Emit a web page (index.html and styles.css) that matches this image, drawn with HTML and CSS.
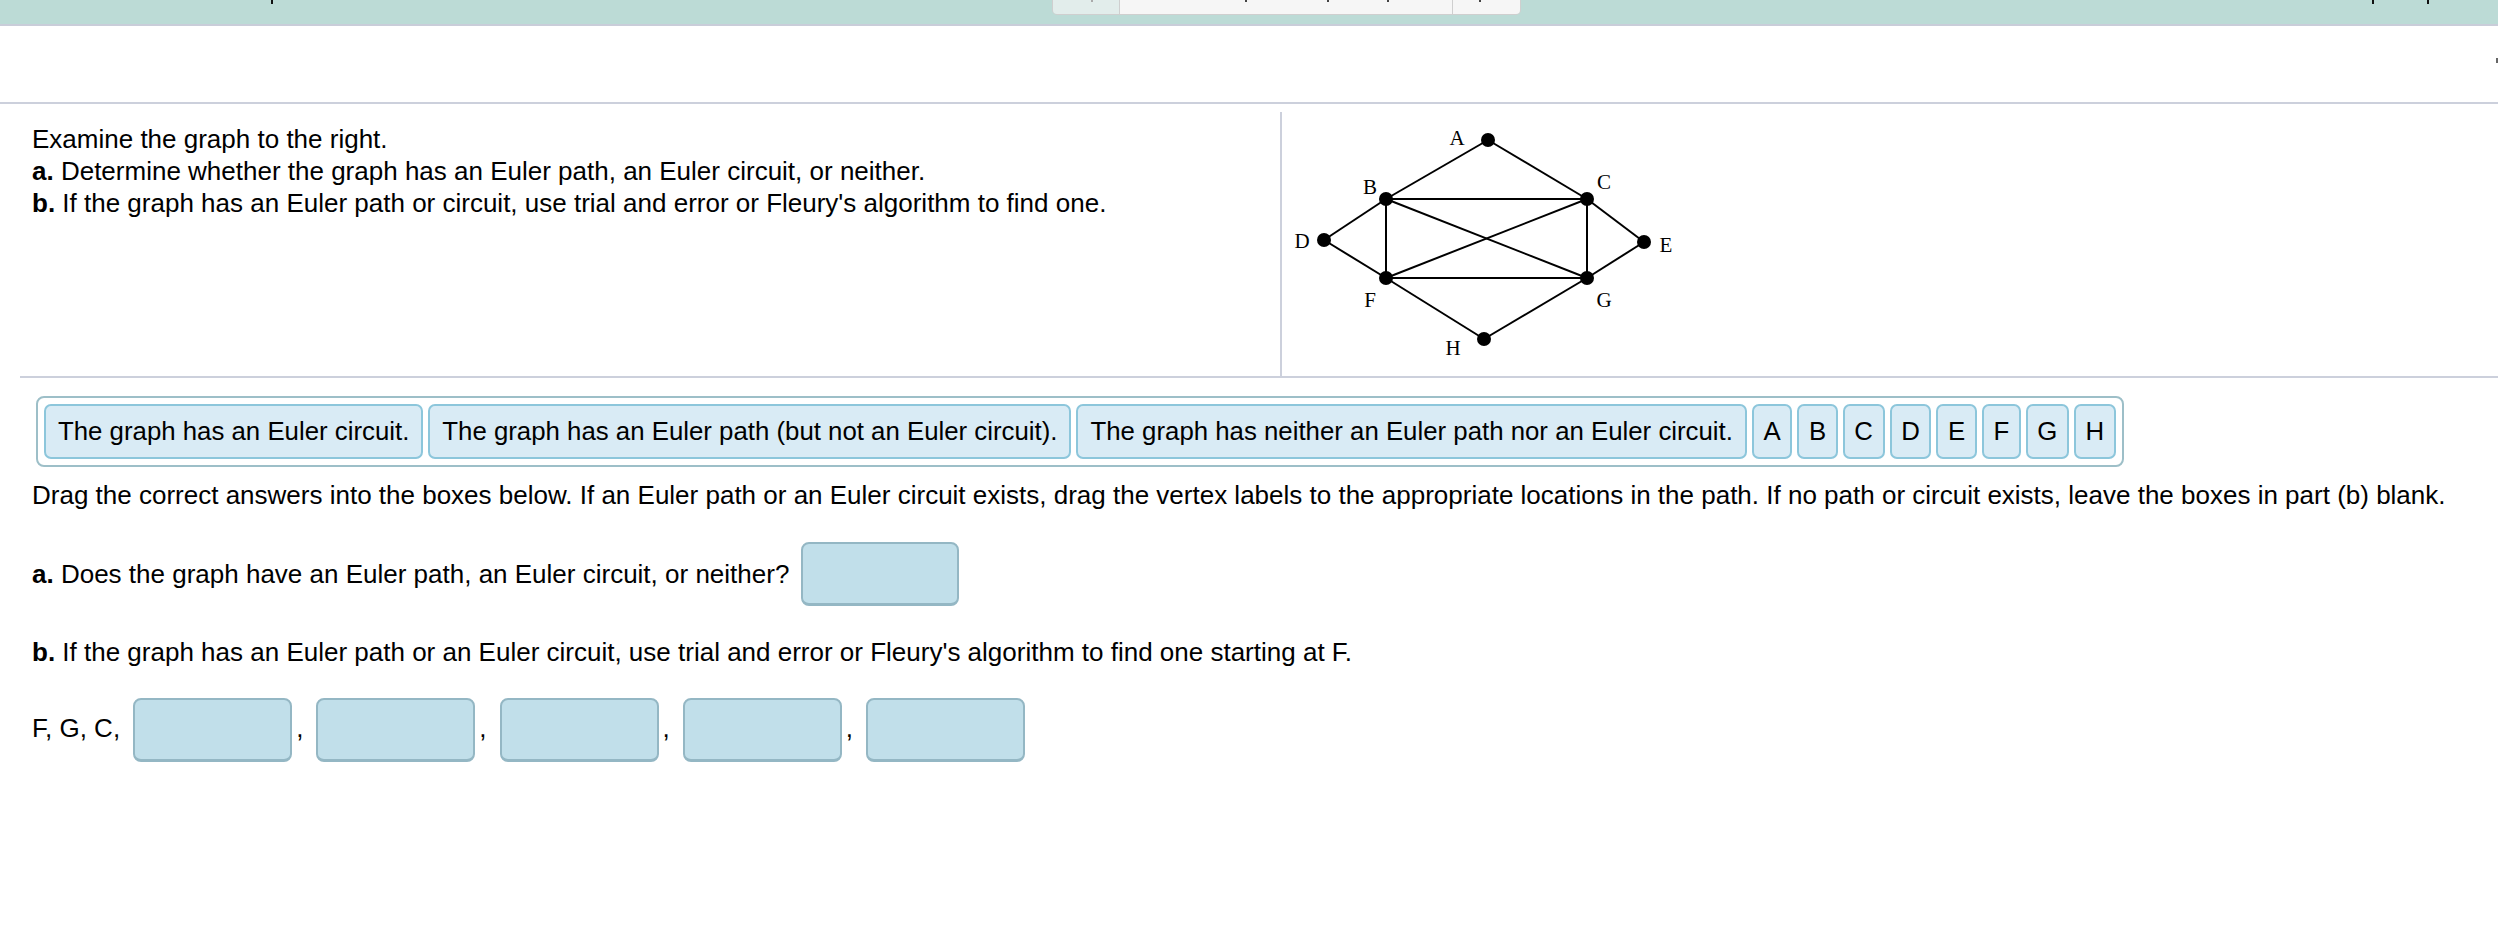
FILE: index.html
```html
<!DOCTYPE html>
<html>
<head>
<meta charset="utf-8">
<title>Euler path question</title>
<link rel="stylesheet" href="styles.css">
</head>
<body>
<header class="topbar">
  <span class="tick tick-1"></span>
  <div class="tab">
    <div class="tab-seg tab-left"><span class="dot dot-a"></span></div>
    <div class="tab-seg tab-mid"><span class="dot dot-b"></span><span class="dot dot-c"></span><span class="dot dot-d"></span></div>
    <div class="tab-seg tab-right"><span class="dot dot-e"></span></div>
  </div>
  <span class="tick tick-2"></span>
  <span class="tick tick-3"></span>
</header>
<div class="toolstrip"><span class="edge-mark"></span></div>

<section class="problem">
  <div class="prompt">
    <p>Examine the graph to the right.</p>
    <p><b>a.</b> Determine whether the graph has an Euler path, an Euler circuit, or neither.</p>
    <p><b>b.</b> If the graph has an Euler path or circuit, use trial and error or Fleury's algorithm to find one.</p>
  </div>
  <div class="figure">
    <svg class="graph" width="420" height="264" viewBox="0 0 420 264" xmlns="http://www.w3.org/2000/svg">
      <g stroke="#000" stroke-width="2" fill="none">
        <line x1="206" y1="28" x2="104" y2="87"/>
        <line x1="206" y1="28" x2="305" y2="87"/>
        <line x1="104" y1="87" x2="305" y2="87"/>
        <line x1="104" y1="87" x2="42" y2="128"/>
        <line x1="104" y1="87" x2="104" y2="166"/>
        <line x1="104" y1="87" x2="305" y2="166"/>
        <line x1="305" y1="87" x2="104" y2="166"/>
        <line x1="305" y1="87" x2="305" y2="166"/>
        <line x1="305" y1="87" x2="362" y2="130"/>
        <line x1="42" y1="128" x2="104" y2="166"/>
        <line x1="362" y1="130" x2="305" y2="166"/>
        <line x1="104" y1="166" x2="305" y2="166"/>
        <line x1="104" y1="166" x2="202" y2="227"/>
        <line x1="305" y1="166" x2="202" y2="227"/>
      </g>
      <g fill="#000">
        <circle cx="206" cy="28" r="7"/>
        <circle cx="104" cy="87" r="7"/>
        <circle cx="305" cy="87" r="7"/>
        <circle cx="42" cy="128" r="7"/>
        <circle cx="362" cy="130" r="7"/>
        <circle cx="104" cy="166" r="7"/>
        <circle cx="305" cy="166" r="7"/>
        <circle cx="202" cy="227" r="7"/>
      </g>
      <g class="vlabel" text-anchor="middle">
        <text x="175" y="33">A</text>
        <text x="88" y="82">B</text>
        <text x="322" y="77">C</text>
        <text x="20" y="136">D</text>
        <text x="384" y="140">E</text>
        <text x="88" y="195">F</text>
        <text x="322" y="195">G</text>
        <text x="171" y="243">H</text>
      </g>
    </svg>
  </div>
</section>

<section class="answer">
  <div class="bank">
    <span class="chip">The graph has an Euler circuit.</span>
    <span class="chip">The graph has an Euler path (but not an Euler circuit).</span>
    <span class="chip">The graph has neither an Euler path nor an Euler circuit.</span>
    <span class="chip letter">A</span>
    <span class="chip letter">B</span>
    <span class="chip letter">C</span>
    <span class="chip letter">D</span>
    <span class="chip letter">E</span>
    <span class="chip letter">F</span>
    <span class="chip letter">G</span>
    <span class="chip letter">H</span>
  </div>
  <p class="instructions">Drag the correct answers into the boxes below. If an Euler path or an Euler circuit exists, drag the vertex labels to the appropriate locations in the path. If no path or circuit exists, leave the boxes in part (b) blank.</p>
  <div class="row-a"><span><b>a.</b> Does the graph have an Euler path, an Euler circuit, or neither?</span><span class="drop drop-wide"></span></div>
  <p class="line-b"><b>b.</b> If the graph has an Euler path or an Euler circuit, use trial and error or Fleury's algorithm to find one starting at F.</p>
  <div class="path"><span>F, G, C,</span><span class="drop"></span><span>,</span><span class="drop"></span><span>,</span><span class="drop"></span><span>,</span><span class="drop"></span><span>,</span><span class="drop"></span></div>
</section>
</body>
</html>
```
FILE: styles.css
```css
* { box-sizing: border-box; }
html, body { margin: 0; padding: 0; background: #fff; }
body {
  font-family: "Liberation Sans", Arial, sans-serif;
  font-size: 26px;
  line-height: 32px;
  color: #000;
  width: 2498px;
  overflow: hidden;
}
p { margin: 0; }

/* top bar */
.topbar {
  height: 26px;
  background: #bcdbd6;
  border-bottom: 2px solid #c9cdd9;
  display: flex;
  align-items: flex-start;
}
.tick { display: block; width: 2px; height: 4px; background: #111; }
.tick-1 { margin-left: 271px; }
.tick-2 { margin-left: 851px; }
.tick-3 { margin-left: 53px; }
.tab {
  margin-left: 779px;
  display: flex;
  height: 15px;
  border: 1px solid #cfcfcf;
  border-top: none;
  border-radius: 0 0 5px 5px;
  overflow: hidden;
}
.tab-seg { height: 14px; display: flex; align-items: flex-start; }
.tab-left { width: 67px; background: #e2edeb; border-right: 1px solid #cfcfcf; }
.tab-mid { width: 333px; background: #f6f6f6; border-right: 1px solid #cfcfcf; }
.tab-right { width: 67px; background: #f6f6f6; }
.dot { display: block; width: 2px; height: 2px; background: #444; }
.dot-a { margin-left: 38px; background: #aaa; }
.dot-b { margin-left: 125px; }
.dot-c { margin-left: 80px; }
.dot-d { margin-left: 58px; }
.dot-e { margin-left: 26px; }

.toolstrip {
  height: 78px;
  border-bottom: 2px solid #ccd0dc;
  display: flex;
  justify-content: flex-end;
}
.edge-mark { display: block; width: 2px; height: 5px; margin-top: 32px; background: #666; }

/* problem */
.problem {
  margin-left: 20px;
  height: 274px;
  padding-top: 8px;
  border-bottom: 2px solid #ccd0dc;
  display: flex;
}
.prompt {
  width: 1260px;
  flex: none;
  padding: 11px 0 0 12px;
}
.figure {
  flex: 1;
  border-left: 2px solid #ccd0dc;
}
.graph { display: block; }
.vlabel text {
  font-family: "Liberation Serif", "Times New Roman", serif;
  font-size: 21px;
  fill: #000;
}

/* answer area */
.answer { padding-left: 32px; padding-top: 18px; }
.bank {
  display: inline-flex;
  gap: 5px;
  margin-left: 4px;
  padding: 6px;
  border: 2px solid #9dbfc8;
  border-radius: 8px;
}
.chip {
  display: block;
  height: 55px;
  line-height: 51px;
  font-size: 25.8px;
  padding: 0 12px;
  background: #d9ebf5;
  border: 2px solid #8cc6db;
  border-radius: 7px;
  white-space: nowrap;
}
.chip.letter { padding: 0 9.6px; }

.instructions { margin-top: 12px; }

.row-a {
  margin-top: 31px;
  display: flex;
  align-items: center;
  gap: 12px;
}
.drop {
  display: inline-block;
  width: 159px;
  height: 64px;
  background: #c1dfea;
  border: 2px solid #94b7c4;
  border-bottom-width: 3px;
  border-radius: 8px;
  vertical-align: middle;
}
.drop-wide { width: 158px; }
.line-b { margin-top: 30px; }
.path { margin-top: 30px; white-space: nowrap; }
.path .drop { margin: 0 4px 0 13px; }
```
